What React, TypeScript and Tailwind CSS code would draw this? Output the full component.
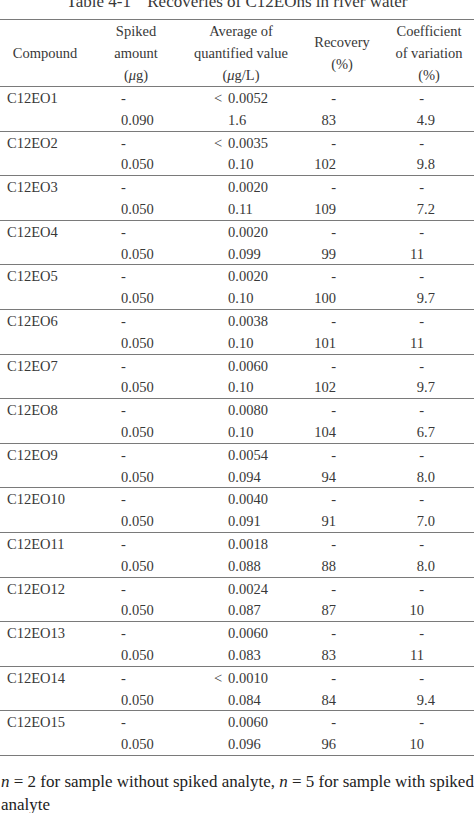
const rows = [
  { name: "C12EO1", blank: "0.0052", lt: true, spiked: "0.090", avg: "1.6", rec: "83", cv: ["4", ".9"] },
  { name: "C12EO2", blank: "0.0035", lt: true, spiked: "0.050", avg: "0.10", rec: "102", cv: ["9", ".8"] },
  { name: "C12EO3", blank: "0.0020", lt: false, spiked: "0.050", avg: "0.11", rec: "109", cv: ["7", ".2"] },
  { name: "C12EO4", blank: "0.0020", lt: false, spiked: "0.050", avg: "0.099", rec: "99", cv: ["11", ""] },
  { name: "C12EO5", blank: "0.0020", lt: false, spiked: "0.050", avg: "0.10", rec: "100", cv: ["9", ".7"] },
  { name: "C12EO6", blank: "0.0038", lt: false, spiked: "0.050", avg: "0.10", rec: "101", cv: ["11", ""] },
  { name: "C12EO7", blank: "0.0060", lt: false, spiked: "0.050", avg: "0.10", rec: "102", cv: ["9", ".7"] },
  { name: "C12EO8", blank: "0.0080", lt: false, spiked: "0.050", avg: "0.10", rec: "104", cv: ["6", ".7"] },
  { name: "C12EO9", blank: "0.0054", lt: false, spiked: "0.050", avg: "0.094", rec: "94", cv: ["8", ".0"] },
  { name: "C12EO10", blank: "0.0040", lt: false, spiked: "0.050", avg: "0.091", rec: "91", cv: ["7", ".0"] },
  { name: "C12EO11", blank: "0.0018", lt: false, spiked: "0.050", avg: "0.088", rec: "88", cv: ["8", ".0"] },
  { name: "C12EO12", blank: "0.0024", lt: false, spiked: "0.050", avg: "0.087", rec: "87", cv: ["10", ""] },
  { name: "C12EO13", blank: "0.0060", lt: false, spiked: "0.050", avg: "0.083", rec: "83", cv: ["11", ""] },
  { name: "C12EO14", blank: "0.0010", lt: true, spiked: "0.050", avg: "0.084", rec: "84", cv: ["9", ".4"] },
  { name: "C12EO15", blank: "0.0060", lt: false, spiked: "0.050", avg: "0.096", rec: "96", cv: ["10", ""] },
];

const grid = "grid grid-cols-[90px_92px_118px_84px_90px]";

function DataRow({ name, spiked, prefix, avg, rec, cv }: {
  name: string;
  spiked: string;
  prefix: string;
  avg: string;
  rec: string;
  cv: string[];
}) {
  return (
    <div className={`${grid} h-[21.8px] items-center`}>
      <div className="pl-[7px]">{name}</div>
      <div className="pl-[31px]">{spiked}</div>
      <div className="flex pl-[32px]">
        <span className="w-[14px]">{prefix}</span>
        <span>{avg}</span>
      </div>
      <div className="pr-[48px] text-right">{rec}</div>
      <div className="flex">
        <span className="w-[40px] text-right">{cv[0]}</span>
        <span>{cv[1]}</span>
      </div>
    </div>
  );
}

export default function App() {
  return (
    <div className="w-[474px] bg-white text-[#383838] font-[family-name:'Liberation_Serif','Times_New_Roman',serif] text-[14.5px] leading-[22px] overflow-hidden">
      <div className="-mt-[7px] mb-[9px] h-[17px] text-center text-[17px] leading-[17px] whitespace-nowrap">
        Table 4-1<span className="ml-[12px]"> </span>Recoveries of C12EOns in river water
      </div>

      <div className="border-t-[1.5px] border-[#7a7a7a]">
        <div className={`${grid} h-[66px] items-center text-center`}>
          <div>Compound</div>
          <div>
            Spiked<br />amount<br />(<i>μ</i>g)
          </div>
          <div>
            Average of<br />quantified value<br />(<i>μ</i>g/L)
          </div>
          <div>
            Recovery<br />(%)
          </div>
          <div>
            Coefficient<br />of variation<br />(%)
          </div>
        </div>

        {rows.map((r) => (
          <div key={r.name} className="border-t-[1.5px] border-[#7a7a7a]">
            <DataRow name={r.name} spiked="-" prefix={r.lt ? "<" : ""} avg={r.blank} rec="-" cv={["-", ""]} />
            <DataRow name="" spiked={r.spiked} prefix="" avg={r.avg} rec={r.rec} cv={r.cv} />
          </div>
        ))}
      </div>

      <div className="border-t-[1.5px] border-[#7a7a7a]" />

      <div className="mt-[14px] pl-[1px] text-[17px] leading-[23px] text-[#222]">
        <span className="whitespace-nowrap">
          <i>n</i> = 2 for sample without spiked analyte, <i>n</i> = 5 for sample with spiked
        </span>
        <br />
        analyte
      </div>
    </div>
  );
}
